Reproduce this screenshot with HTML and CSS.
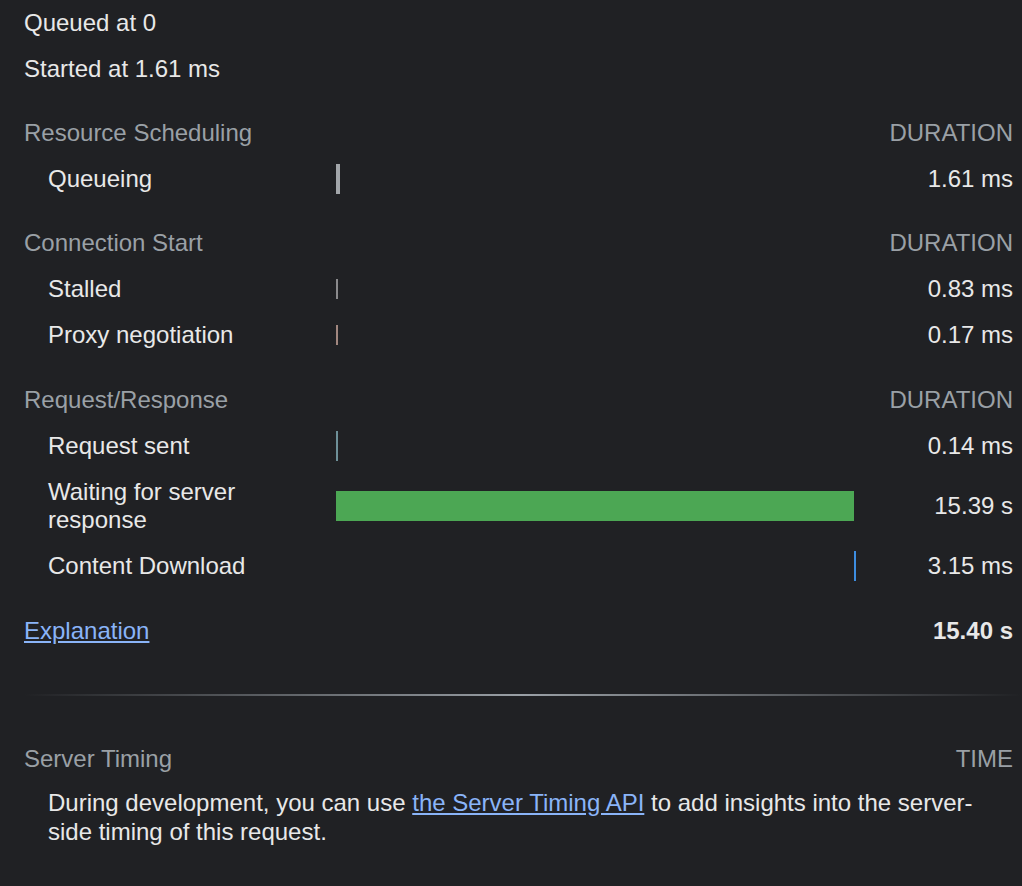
FILE: index.html
```html
<!DOCTYPE html>
<html>
<head>
<meta charset="utf-8">
<link rel="stylesheet" href="styles.css">
</head>
<body>
<div class="timing">
  <div class="meta">Queued at 0</div>
  <div class="meta">Started at 1.61 ms</div>

  <div class="table">
    <div class="hdr">Resource Scheduling</div><div class="hdr-r">DURATION</div>
    <div class="lbl">Queueing</div>
    <div class="bars"><span class="bar q" style="margin-left:0;width:4px"></span></div>
    <div class="dur">1.61 ms</div>

    <div class="hdr">Connection Start</div><div class="hdr-r">DURATION</div>
    <div class="lbl">Stalled</div>
    <div class="bars"><span class="bar short st" style="margin-left:0;width:2px"></span></div>
    <div class="dur">0.83 ms</div>
    <div class="lbl">Proxy negotiation</div>
    <div class="bars"><span class="bar short px" style="margin-left:0;width:2px"></span></div>
    <div class="dur">0.17 ms</div>

    <div class="hdr hdr-wide">Request/Response</div><div class="hdr-r hdr-wide">DURATION</div>
    <div class="lbl">Request sent</div>
    <div class="bars"><span class="bar rs" style="margin-left:0;width:2px"></span></div>
    <div class="dur">0.14 ms</div>
    <div class="lbl">Waiting for server response</div>
    <div class="bars"><span class="bar wt" style="margin-left:0;width:518px"></span></div>
    <div class="dur">15.39 s</div>
    <div class="lbl">Content Download</div>
    <div class="bars"><span class="bar cd" style="margin-left:518px;width:2px"></span></div>
    <div class="dur">3.15 ms</div>

    <div class="foot"><a class="link" href="#">Explanation</a></div><div class="total">15.40 s</div>
  </div>

  <div class="sep"></div>

  <div class="server">
    <div class="srv-head"><span class="hdr-t">Server Timing</span><span class="hdr-t">TIME</span></div>
    <p class="srv-text">During development, you can use <a class="link" href="#">the Server Timing API</a> to add insights into the server-side timing of this request.</p>
  </div>
</div>
</body>
</html>
```
FILE: styles.css
```css
html, body {
  margin: 0;
  padding: 0;
  background: #202124;
}
body {
  font-family: "Liberation Sans", Arial, Helvetica, sans-serif;
  font-size: 24px;
  line-height: 28px;
  color: #e8e8e8;
}
.timing {
  padding: 0 9px 30px 24px;
}
.meta {
  padding: 9px 0;
}
.table {
  display: grid;
  grid-template-columns: 312px 520px 1fr;
  align-items: center;
}
.hdr {
  grid-column: 1 / 3;
  color: #9aa0a6;
  padding: 9px 0;
  margin-top: 18px;
}
.hdr-r {
  color: #9aa0a6;
  text-align: right;
  padding: 9px 0;
  margin-top: 18px;
}
.hdr-wide {
  margin-top: 19px;
}
.lbl {
  padding: 9px 24px 9px 24px;
}
.bars {
  display: flex;
  align-items: center;
  height: 30px;
}
.bar {
  display: block;
  height: 30px;
  flex: none;
}
.bar.short { height: 20px; }
.q { background: #a2a6aa; }
.st { background: #8a8a8c; }
.px { background: #a1877f; }
.rs { background: #6e9098; }
.wt { background: #4ca754; }
.cd { background: #3d8de0; }
.dur {
  text-align: right;
  padding: 9px 0;
}
.foot {
  grid-column: 1 / 3;
  padding: 9px 0;
  margin-top: 19px;
}
.total {
  text-align: right;
  font-weight: bold;
  padding: 9px 0;
  margin-top: 19px;
}
.link {
  color: #8ab4f8;
  text-decoration: underline;
}
.sep {
  height: 2px;
  margin: 40px -9px 0 0;
  background: linear-gradient(to right, rgba(154,160,166,0), #9aa0a6 50%, rgba(154,160,166,0));
}
.server {
  padding-top: 40px;
}
.srv-head {
  display: flex;
  justify-content: space-between;
  padding: 9px 0;
}
.hdr-t {
  color: #9aa0a6;
}
.srv-text {
  margin: 0;
  padding: 6px 0 0 24px;
  line-height: 29px;
}
```
